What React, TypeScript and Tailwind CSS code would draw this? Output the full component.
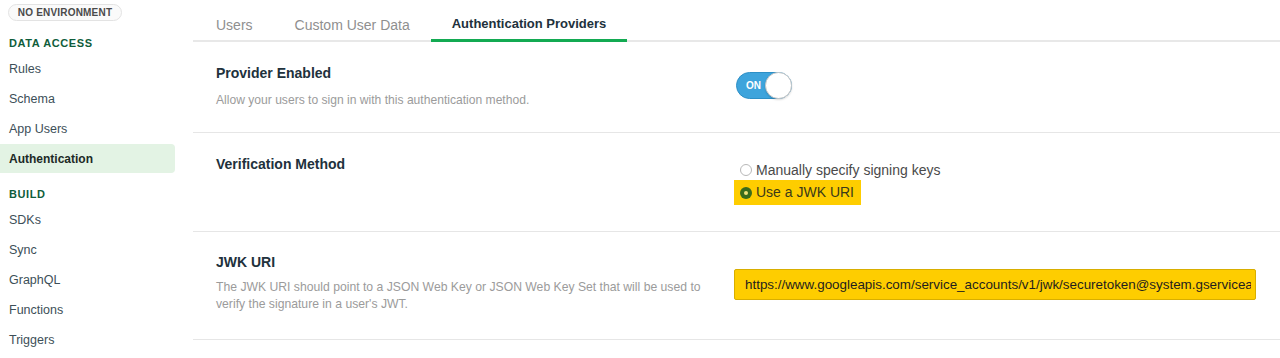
import React from 'react';

const font = { fontFamily: '"Liberation Sans", Arial, sans-serif' };

function Sidebar() {
    const dataAccess = ['Rules', 'Schema', 'App Users', 'Authentication'];
    const build = ['SDKs', 'Sync', 'GraphQL', 'Functions', 'Triggers'];

    return (
        <div className="w-[193px] shrink-0 pt-[4px]">
            <div className="ml-[8px] w-[114px] h-[17px] rounded-full border border-[#e3e3e3] bg-[#fafafa] flex items-center justify-center text-[10px] font-bold text-[#4a4a4a] tracking-[0.2px]">
                NO ENVIRONMENT
            </div>
            <div className="mt-[12px] h-[21px] pl-[9px] flex items-center text-[11px] font-bold text-[#0f5d3b] tracking-[0.6px]">DATA ACCESS</div>
            {dataAccess.map(item => (
                <div
                    key={item}
                    className={
                        item === 'Authentication'
                            ? 'h-[29px] w-[175px] pl-[9px] flex items-center text-[12px] font-bold text-[#1c2a26] bg-[#e3f3e4] rounded-r-[4px]'
                            : 'h-[30px] pl-[9px] flex items-center text-[12.5px] text-[#3d4f58]'
                    }
                >
                    {item}
                </div>
            ))}
            <div className="mt-[11px] h-[21px] pl-[9px] flex items-center text-[11px] font-bold text-[#0f5d3b] tracking-[0.6px]">BUILD</div>
            {build.map(item => (
                <div key={item} className="h-[30px] pl-[9px] flex items-center text-[12.5px] text-[#3d4f58]">{item}</div>
            ))}
        </div>
    );
}

function Tabs() {
    const tabs = ['Users', 'Custom User Data', 'Authentication Providers'];
    return (
        <div className="flex border-b-2 border-[#e8e8e8] pl-[2px]">
            {tabs.map(tab => (
                <div
                    key={tab}
                    className={
                        tab === 'Authentication Providers'
                            ? 'h-[42px] -mb-[2px] px-[21px] pt-[8px] flex items-center text-[13px] font-bold text-[#21313c] border-b-[3px] border-[#13aa52]'
                            : 'h-[42px] -mb-[2px] px-[21px] pt-[8px] flex items-center text-[14px] text-[#8f8f8f]'
                    }
                >
                    {tab}
                </div>
            ))}
        </div>
    );
}

function App() {
    return (
        <div className="w-[1280px] h-[358px] bg-white flex overflow-hidden" style={font}>
            <Sidebar />
            <div className="flex-1 min-w-0">
                <Tabs />

                <div className="flex border-b border-[#e6e6e6] pt-[21px] pb-[24px]">
                    <div className="w-[541px] pl-[23px]">
                        <div className="h-[20px] flex items-center text-[14px] font-bold text-[#21313c]">Provider Enabled</div>
                        <div className="mt-[9px] h-[16px] flex items-center text-[12.1px] text-[#9b9b9b]">Allow your users to sign in with this authentication method.</div>
                    </div>
                    <div className="flex-1 pt-[9px] pl-[2px]">
                        <div className="w-[56px] h-[27px] rounded-full bg-[#3ea4dc] border border-[#2d8fc6] flex items-center justify-between pl-[9px]">
                            <span className="text-[10px] font-bold text-white">ON</span>
                            <span className="w-[27px] h-[27px] -mr-[1px] rounded-full bg-white border border-[#c8c8c8] shadow-[0_1px_2px_rgba(0,0,0,0.15)]" />
                        </div>
                    </div>
                </div>

                <div className="flex border-b border-[#e6e6e6] pt-[21px] pb-[26px]">
                    <div className="w-[541px] pl-[23px]">
                        <div className="h-[20px] flex items-center text-[14px] font-bold text-[#21313c]">Verification Method</div>
                    </div>
                    <div className="flex-1 pt-[6px]">
                        <div className="h-[20px] pl-[6px] flex items-center gap-[4px] text-[14px] text-[#4a4a4a]">
                            <span className="w-[12px] h-[12px] rounded-full border border-[#b8b8b8] bg-white" />
                            Manually specify signing keys
                        </div>
                        <div className="h-[25px] w-[127px] pl-[6px] flex items-center gap-[4px] text-[14px] text-[#3a3a1a] bg-[#fecd00]">
                            <span className="w-[12px] h-[12px] rounded-full bg-[#3a6b1c] flex items-center justify-center">
                                <span className="w-[4px] h-[4px] rounded-full bg-[#f0e07a]" />
                            </span>
                            Use a JWK URI
                        </div>
                    </div>
                </div>

                <div className="flex border-b border-[#e6e6e6] pt-[20px] pb-[26px]">
                    <div className="w-[541px] pl-[23px]">
                        <div className="h-[20px] flex items-center text-[14px] font-bold text-[#21313c]">JWK URI</div>
                        <div className="mt-[7px] text-[12.2px] leading-[17px] text-[#9b9b9b] w-[500px]">
                            The JWK URI should point to a JSON Web Key or JSON Web Key Set that will be used to verify the signature in a user's JWT.
                        </div>
                    </div>
                    <div className="flex-1 min-w-0 pt-[17px] pr-[24px]">
                        <input
                            readOnly
                            value="https://www.googleapis.com/service_accounts/v1/jwk/securetoken@system.gserviceaccount.com"
                            className="block h-[31px] w-[522px] rounded-[2px] bg-[#fecd00] border border-[#d8ae00] pl-[10px] pr-[4px] text-[13.4px] text-[#1e1e1e] outline-none"
                            style={font}
                        />
                    </div>
                </div>
            </div>
        </div>
    );
}

export default App;
